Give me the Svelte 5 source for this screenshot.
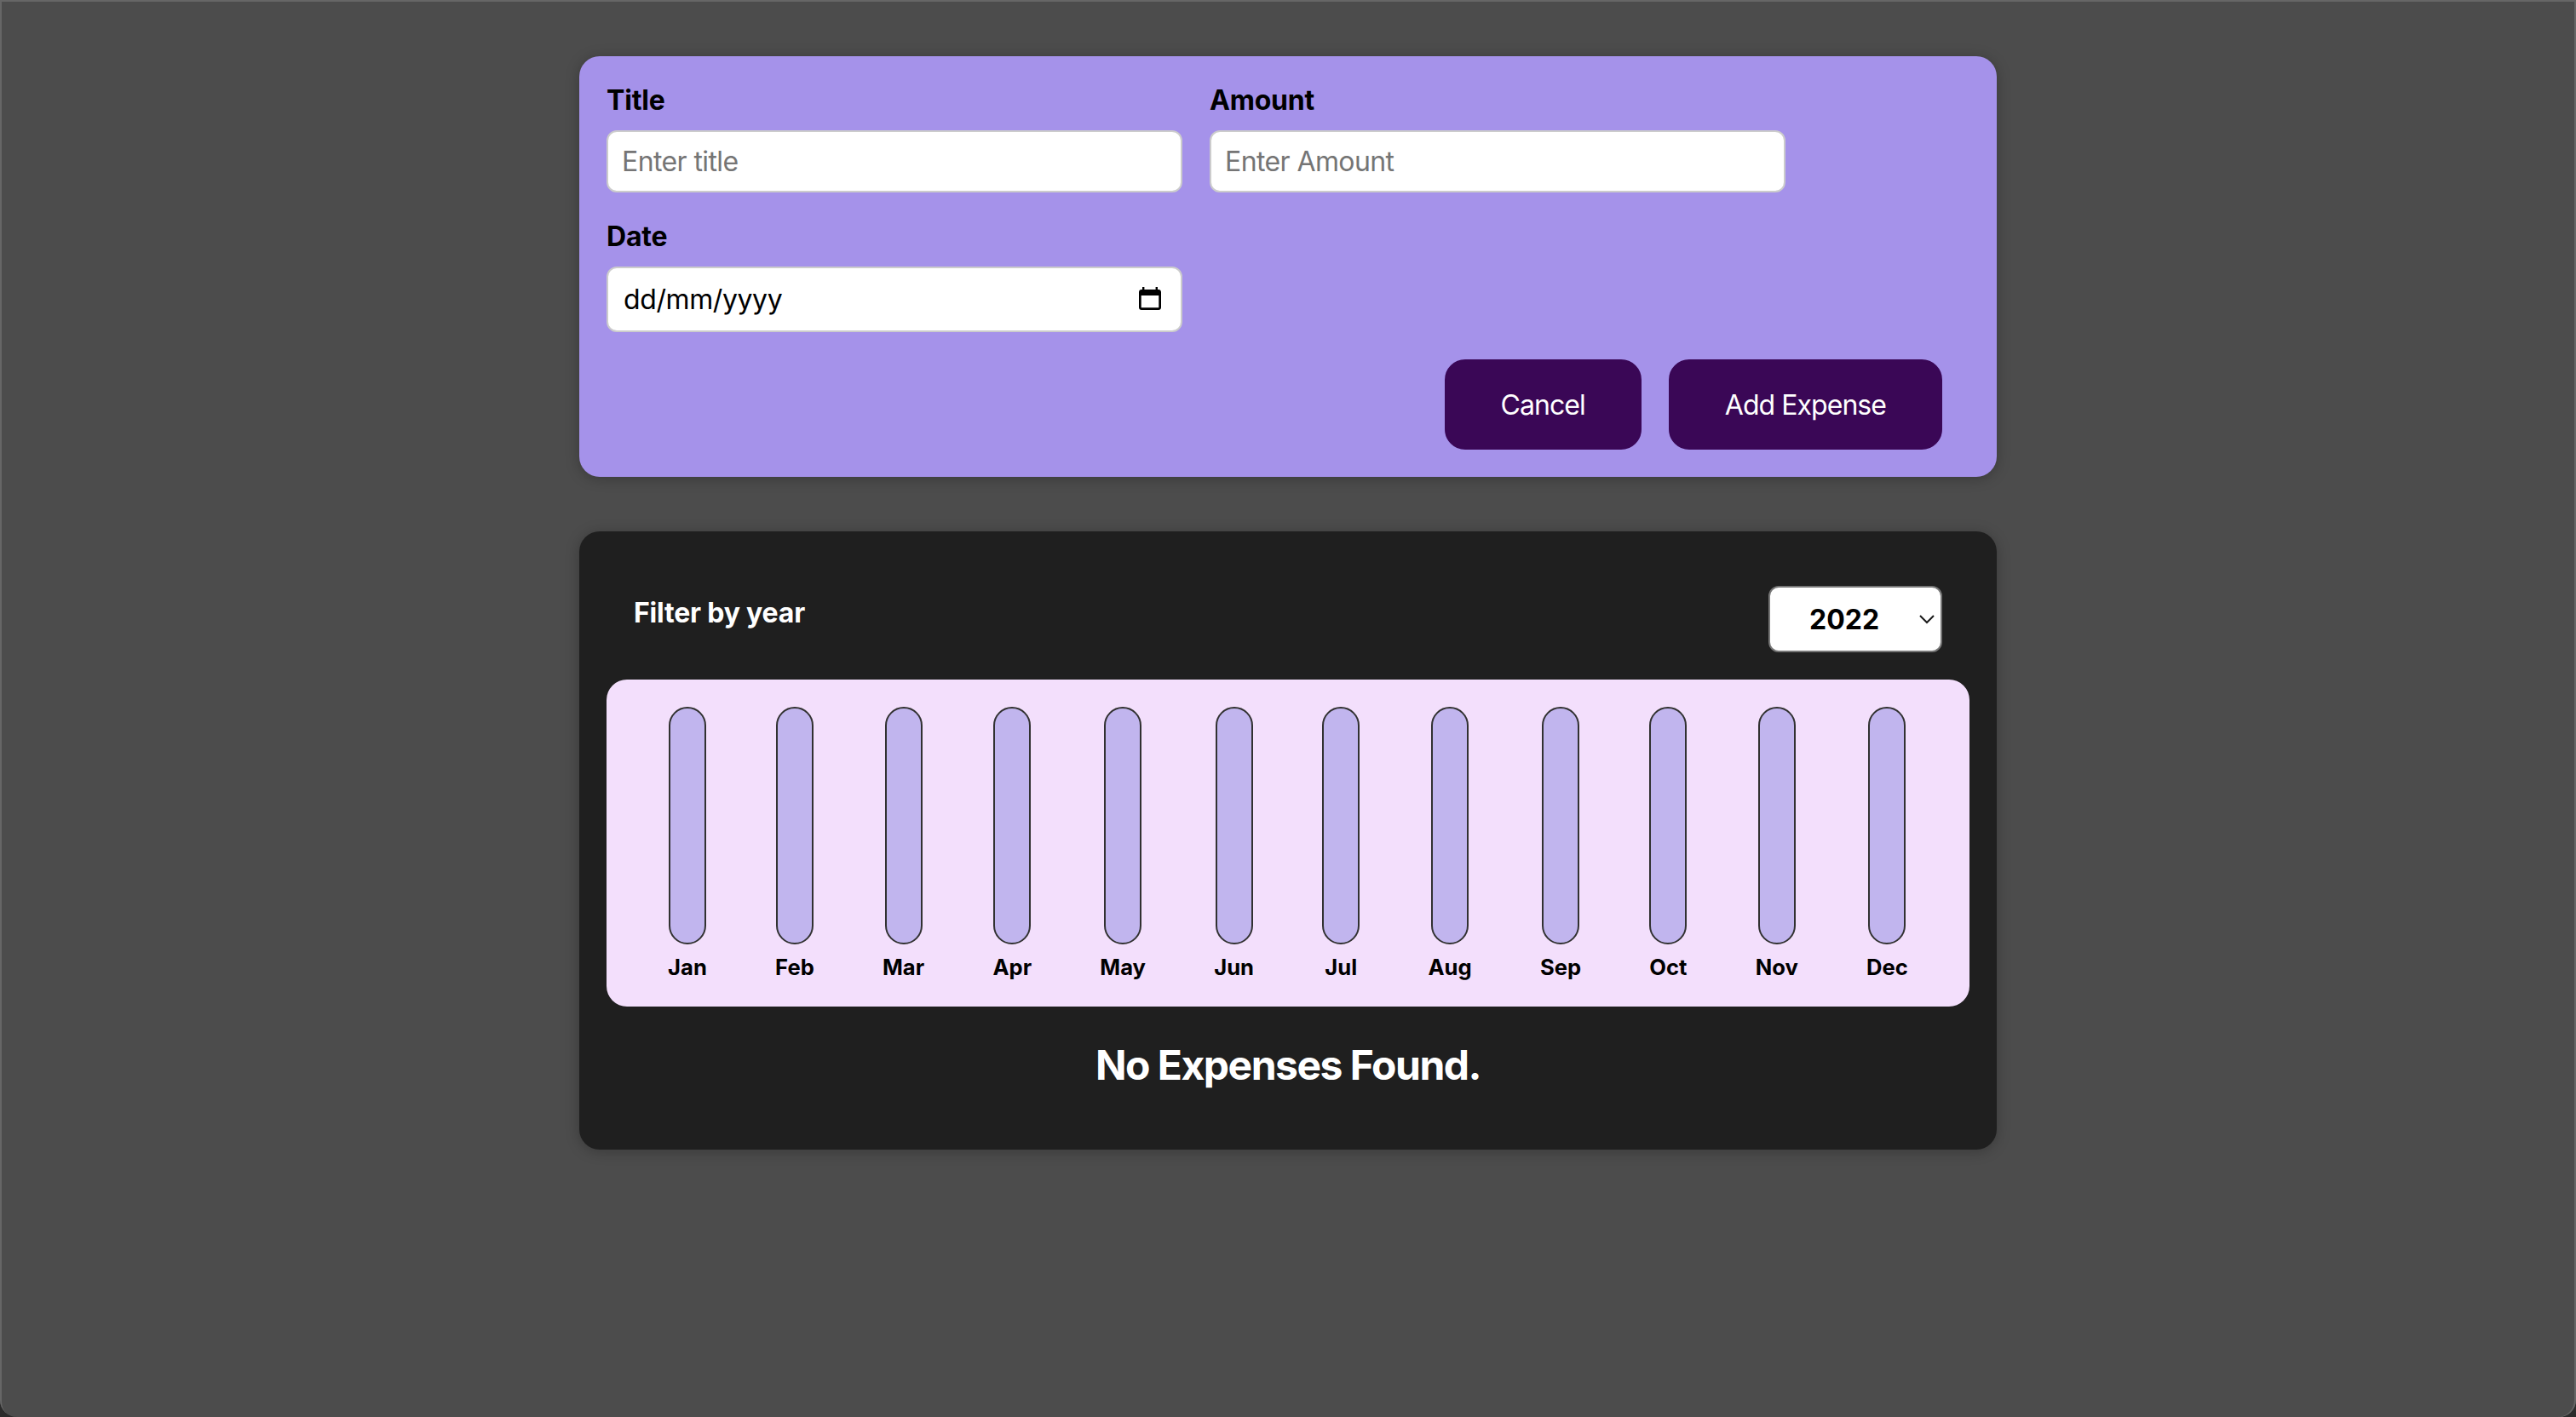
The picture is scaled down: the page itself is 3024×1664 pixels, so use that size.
<script>
  const months = ['Jan', 'Feb', 'Mar', 'Apr', 'May', 'Jun', 'Jul', 'Aug', 'Sep', 'Oct', 'Nov', 'Dec'];

  let title = '';
  let amount = '';
  let date = '';
  let year = '2022';
</script>

<main class="page">
  <section class="new-expense">
    <form on:submit|preventDefault>
      <div class="controls">
        <div class="control">
          <label for="title">Title</label>
          <input id="title" type="text" placeholder="Enter title" bind:value={title} />
        </div>
        <div class="control">
          <label for="amount">Amount</label>
          <input id="amount" type="text" placeholder="Enter Amount" bind:value={amount} />
        </div>
        <div class="control">
          <label for="date">Date</label>
          <div class="date-wrap">
            <input id="date" class="date-input" type="text" placeholder="dd/mm/yyyy" bind:value={date} />
            <svg class="calendar" viewBox="0 0 26 27" width="26" height="27" aria-hidden="true">
              <path
                fill-rule="evenodd"
                d="M4 0h2.4v3h13.2V0H22v3h1c1.7 0 3 1.3 3 3v18c0 1.7-1.3 3-3 3H3c-1.7 0-3-1.3-3-3V6c0-1.7 1.3-3 3-3h1zM2.7 10v14.300h20.600V10z"
              />
            </svg>
          </div>
        </div>
      </div>
      <div class="actions">
        <button type="button">Cancel</button>
        <button type="submit">Add Expense</button>
      </div>
    </form>
  </section>

  <section class="expenses">
    <div class="filter">
      <label for="year">Filter by year</label>
      <div class="select-wrap">
        <select id="year" bind:value={year}>
          <option value="2022">2022</option>
          <option value="2021">2021</option>
          <option value="2020">2020</option>
          <option value="2019">2019</option>
        </select>
        <svg class="chevron" viewBox="0 0 18 11" width="18" height="11" aria-hidden="true">
          <path d="M1 1l8 8 8-8" fill="none" stroke="#1a1a1a" stroke-width="2" />
        </svg>
      </div>
    </div>

    <div class="chart">
      {#each months as month}
        <div class="chart-bar">
          <div class="bar"></div>
          <div class="bar-label">{month}</div>
        </div>
      {/each}
    </div>

    <h2 class="fallback">No Expenses Found.</h2>
  </section>
</main>

<style>
  :global(body) {
    margin: 0;
    background: #2b2b2b;
  }

  .page {
    height: 1664px;
    box-sizing: border-box;
    padding-top: 66px;
    overflow: hidden;
    border-radius: 0 0 20px 20px;
    background: #4c4c4c;
    font-family: Inter, "Noto Sans", sans-serif;
    box-shadow: inset 2px 2px 0 #666, inset -2px 0 0 #666;
  }

  .new-expense,
  .expenses {
    width: 1664px;
    box-sizing: border-box;
    margin: 0 auto;
    padding: 32px;
    border-radius: 24px;
    box-shadow: 0 2px 16px rgba(0, 0, 0, 0.25);
  }

  .new-expense {
    background: #a592ea;
    margin-bottom: 64px;
  }

  .expenses {
    background: #1f1f1f;
  }

  .controls {
    display: flex;
    flex-wrap: wrap;
    gap: 32px;
  }

  label {
    display: block;
    margin-bottom: 16px;
    font-size: 32px;
    font-weight: 700;
    letter-spacing: -0.2px;
    color: #000;
  }

  input {
    display: block;
    width: 676px;
    box-sizing: border-box;
    height: 73px;
    padding: 0 16px;
    border: 2px solid #ccc;
    border-radius: 12px;
    background: #fff;
    font: inherit;
    font-size: 32px;
    letter-spacing: -0.6px;
    color: #000;
  }

  input::placeholder {
    color: #757575;
    opacity: 1;
  }

  .date-wrap {
    position: relative;
  }

  .date-input {
    height: 77px;
    padding-left: 18px;
    letter-spacing: -0.4px;
  }

  .date-input::placeholder {
    color: #000;
  }

  .calendar {
    position: absolute;
    top: 24px;
    right: 25px;
    pointer-events: none;
  }

  .actions {
    display: flex;
    justify-content: flex-end;
    gap: 32px;
    margin-top: 32px;
    padding-right: 32px;
  }

  button {
    height: 106px;
    padding: 0 64px;
    border: 2px solid #3a0756;
    border-radius: 24px;
    background: #3a0756;
    color: #fff;
    font: inherit;
    font-size: 32px;
    letter-spacing: -0.95px;
    cursor: pointer;
  }

  .filter {
    display: flex;
    align-items: center;
    justify-content: space-between;
    padding: 32px;
  }

  .filter label {
    color: #fff;
  }

  .select-wrap {
    position: relative;
  }

  select {
    display: block;
    appearance: none;
    width: 204px;
    height: 78px;
    box-sizing: border-box;
    padding: 0 0 0 46px;
    border: 2px solid #767676;
    border-radius: 12px;
    background: #fff;
    font: inherit;
    font-size: 32px;
    font-weight: 700;
    color: #000;
  }

  .chevron {
    position: absolute;
    top: 34px;
    right: 9px;
    pointer-events: none;
  }

  .chart {
    display: flex;
    justify-content: space-around;
    height: 384px;
    box-sizing: border-box;
    padding: 32px;
    border-radius: 24px;
    background: #f3dffc;
  }

  .chart-bar {
    display: flex;
    flex-direction: column;
    align-items: center;
    height: 100%;
  }

  .bar {
    flex: 1;
    width: 44px;
    box-sizing: border-box;
    border: 2px solid #313131;
    border-radius: 22px;
    background: #c1b5ee;
  }

  .bar-label {
    margin-top: 12px;
    font-size: 25.6px;
    font-weight: 700;
    line-height: 29px;
    color: #000;
  }

  .fallback {
    margin: 40px 0 38px;
    font-size: 48px;
    font-weight: 700;
    line-height: 58px;
    letter-spacing: -1.5px;
    text-align: center;
    color: #fff;
  }
</style>
